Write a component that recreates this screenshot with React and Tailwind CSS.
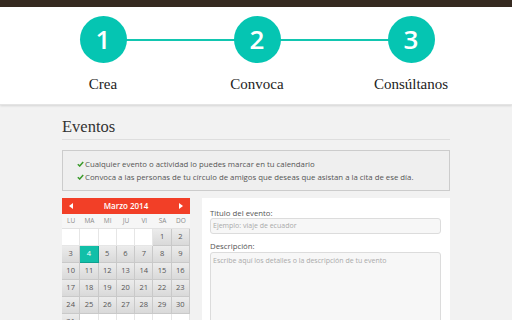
import React from 'react';

const STEPS = [
  { n: '1', label: 'Crea' },
  { n: '2', label: 'Convoca' },
  { n: '3', label: 'Consúltanos' },
];

const WEEKDAYS = ['LU', 'MA', 'MI', 'JU', 'VI', 'SA', 'DO'];

// marzo 2014 empieza en sábado
const DAYS = [
  null, null, null, null, null, 1, 2,
  3, 4, 5, 6, 7, 8, 9,
  10, 11, 12, 13, 14, 15, 16,
  17, 18, 19, 20, 21, 22, 23,
  24, 25, 26, 27, 28, 29, 30,
  31, null, null, null, null, null, null,
];

const sans = { fontFamily: '"Open Sans", "Noto Sans", sans-serif' };
const serif = { fontFamily: '"Liberation Serif", "DejaVu Serif", serif' };

const Check = () => (
  <svg width="7" height="6" viewBox="0 0 7 6" className="shrink-0">
    <path d="M0.8 3.2 L2.7 5 L6.2 0.9" stroke="#3a9a2a" strokeWidth="1.5" fill="none" />
  </svg>
);

const Calendar = () => (
  <div className="w-[128px] shrink-0" style={sans}>
    <div className="h-[16px] bg-[#f23f27] flex items-center justify-between px-[7px] text-white">
      <svg width="4" height="6" viewBox="0 0 4 6"><path d="M4 0 L0 3 L4 6Z" fill="#fff" /></svg>
      <span className="text-[8px] font-semibold">Marzo 2014</span>
      <svg width="4" height="6" viewBox="0 0 4 6"><path d="M0 0 L4 3 L0 6Z" fill="#fff" /></svg>
    </div>
    <div className="grid grid-cols-7 h-[15px] bg-[#f6f6f6] border-b border-[#e2e2e2]">
      {WEEKDAYS.map((d) => (
        <div key={d} className="flex items-center justify-center text-[6.5px] text-[#8a8a8a]">{d}</div>
      ))}
    </div>
    <div className="grid grid-cols-7">
      {DAYS.map((d, i) => {
        if (d === null) {
          return <div key={i} className="h-[17px] bg-white border-r border-b border-[#e6e6e6]" />;
        }
        const today = d === 4;
        return (
          <div
            key={i}
            className={`h-[17px] flex items-center justify-center text-[7.5px] border-r border-b ${
              today
                ? 'bg-[#12bfa8] text-white border-[#0fa090]'
                : 'bg-gradient-to-b from-[#ececec] to-[#d9d9d9] text-[#555] border-[#c9c9c9]'
            }`}
          >
            {d}
          </div>
        );
      })}
    </div>
  </div>
);

const App = () => {
  return (
    <div className="w-[512px] h-[320px] overflow-hidden bg-[#f2f2f2]">
      <div className="h-[7px] bg-[#362a21]" />

      {/* pasos */}
      <header className="h-[98px] bg-white shadow-[0_1px_2px_rgba(0,0,0,0.12)] border-b border-[#e4e4e4] flex justify-center">
        <div className="relative flex pl-[2px]">
          <div className="absolute top-[32px] left-[79px] w-[308px] h-[2px] bg-[#12c6b0]" />
          {STEPS.map((s) => (
            <div key={s.n} className="relative w-[154px] flex flex-col items-center">
              <div
                className="mt-[9px] w-[47px] h-[47px] rounded-full bg-[#05c5b2] flex items-center justify-center text-white text-[26px] font-semibold"
                style={sans}
              >
                {s.n}
              </div>
              <div className="mt-[10px] text-[15px] text-[#222]" style={serif}>{s.label}</div>
            </div>
          ))}
        </div>
      </header>

      <main className="w-[388px] mx-auto pt-[12px]">
        <h2 className="text-[16.5px] leading-[20px] text-[#333] pb-[2px] border-b border-[#dedede]" style={serif}>
          Eventos
        </h2>

        <div className="mt-[10px] h-[41px] border border-[#cccccc] bg-[#efefef] pl-[14px] flex flex-col justify-center gap-[3px] text-[7.8px] leading-[10px] text-[#555]" style={sans}>
          <div className="flex items-center gap-[1px]"><Check />Cualquier evento o actividad lo puedes marcar en tu calendario</div>
          <div className="flex items-center gap-[1px]"><Check />Convoca a las personas de tu círculo de amigos que deseas que asistan a la cita de ese día.</div>
        </div>

        <div className="mt-[7px] flex gap-[12px] items-start">
          <Calendar />
          <div className="flex-1 h-[130px] bg-white px-[8px] pt-[10px] text-[#555]" style={sans}>
            <label className="block text-[7.8px] leading-[10px]">Titulo del evento:</label>
            <div className="h-[16px] w-[231px] rounded-[3px] border border-[#dcdcdc] bg-[#f7f7f7] px-[2px] flex items-center text-[7px] text-[#aaa]">
              Ejemplo: viaje de ecuador
            </div>
            <label className="block mt-[7px] text-[7.8px] leading-[10px]">Descripción:</label>
            <div className="mt-[1px] h-[90px] w-[231px] rounded-[3px] border border-[#dcdcdc] bg-[#f7f7f7] px-[2px] pt-[3px] text-[7px] text-[#aaa]">
              Escribe aquí los detalles o la descripción de tu evento
            </div>
          </div>
        </div>
      </main>
    </div>
  );
};

export default App;
